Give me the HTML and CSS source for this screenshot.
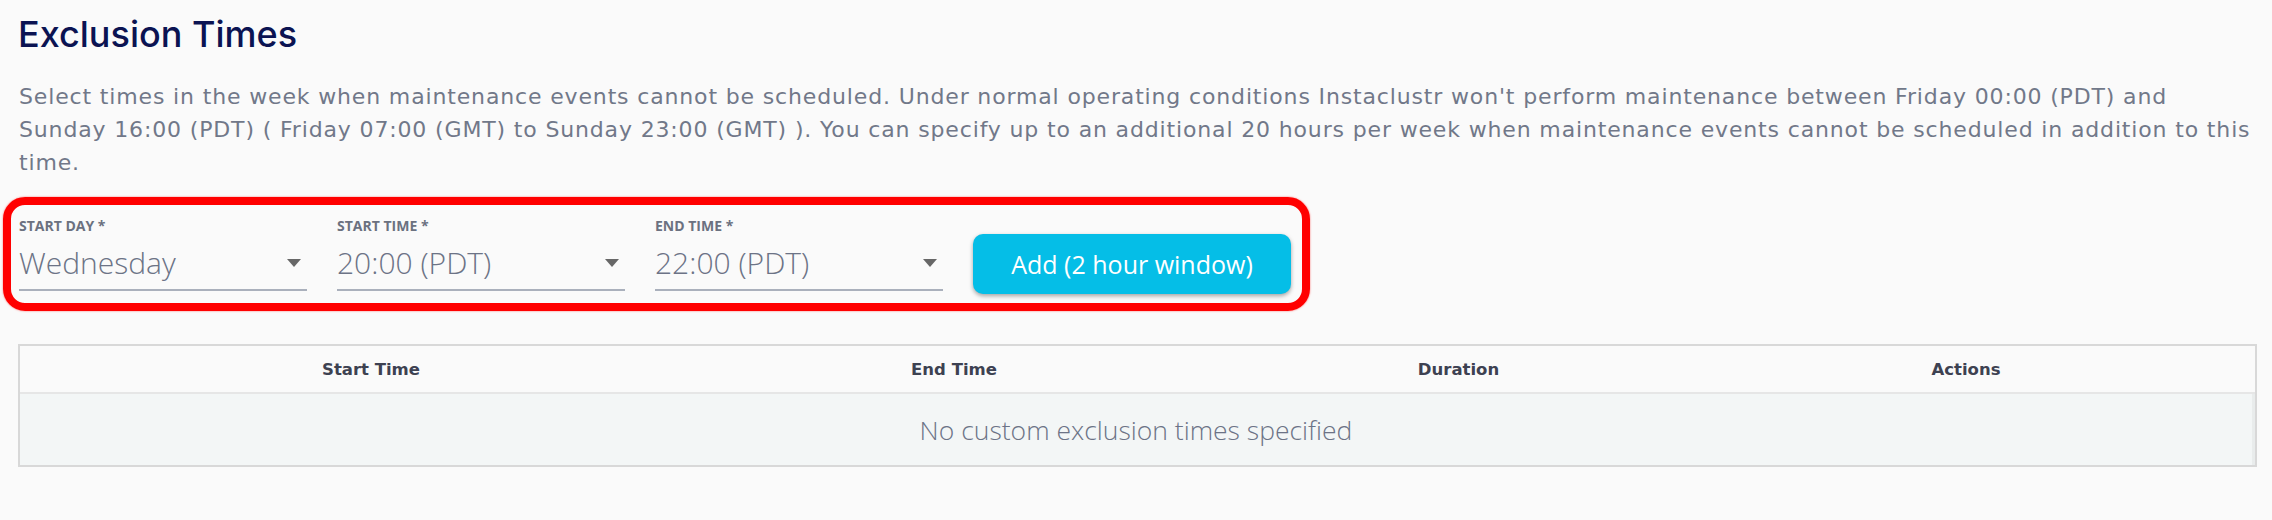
FILE: index.html
```html
<!DOCTYPE html>
<html lang="en">
<head>
<meta charset="utf-8">
<title>Exclusion Times</title>
<link rel="stylesheet" href="styles.css">
</head>
<body>
<main class="page">
  <h1 class="title">Exclusion Times</h1>
  <p class="intro">Select times in the week when maintenance events cannot be scheduled. Under normal operating conditions Instaclustr won't perform maintenance between Friday 00:00 (PDT) and<br>Sunday 16:00 (PDT) ( Friday 07:00 (GMT) to Sunday 23:00 (GMT) ). You can specify up to an additional 20 hours per week when maintenance events cannot be scheduled in addition to this<br>time.</p>

  <div class="form-row">
    <div class="field">
      <label class="field-label">START DAY *</label>
      <div class="select"><span class="select-value">Wednesday</span><span class="caret"></span></div>
    </div>
    <div class="field">
      <label class="field-label">START TIME *</label>
      <div class="select"><span class="select-value">20:00 (PDT)</span><span class="caret"></span></div>
    </div>
    <div class="field">
      <label class="field-label">END TIME *</label>
      <div class="select"><span class="select-value">22:00 (PDT)</span><span class="caret"></span></div>
    </div>
    <button class="add-btn" type="button">Add (2 hour window)</button>
  </div>

  <div class="grid-table">
    <div class="thead">
      <div class="th th-first">Start Time</div>
      <div class="th">End Time</div>
      <div class="th">Duration</div>
      <div class="th th-last">Actions</div>
    </div>
    <div class="tbody">
      <div class="col-line"></div>
      <div class="col-line"></div>
      <div class="col-line"></div>
      <div class="col-line last"></div>
      <div class="empty">No custom exclusion times specified</div>
    </div>
  </div>
</main>
</body>
</html>
```
FILE: styles.css
```css
html, body {
  margin: 0;
  padding: 0;
  background: #fafafa;
}

.page {
  padding: 0 15px 0 19px;
  font-family: "DejaVu Sans", "Open Sans", sans-serif;
}

.title {
  margin: 13px 0 0 -1px;
  font-family: "Inter", "DejaVu Sans", sans-serif;
  font-size: 36px;
  line-height: 42px;
  font-weight: 500;
  color: #0b1352;
}

.intro {
  margin: 25px 0 0;
  font-size: 22px;
  line-height: 33px;
  letter-spacing: 0.85px;
  color: #717889;
  white-space: nowrap;
}

.form-row {
  display: inline-flex;
  align-items: flex-end;
  gap: 30px;
  margin: 18px 0 0 -16px;
  padding: 13px 11px 12px 8px;
  border: 8px solid #ff0000;
  border-radius: 22px;
  box-shadow: 0 0 2px rgba(255, 0, 0, 0.6);
}

.field {
  display: flex;
  flex-direction: column;
  width: 288px;
}

.field-label {
  font-family: "Open Sans", sans-serif;
  font-size: 14px;
  line-height: 16px;
  font-weight: 700;
  color: #6b7180;
}

.select {
  display: flex;
  align-items: center;
  justify-content: space-between;
  margin-top: 2px;
  height: 53px;
  border-bottom: 2px solid #aab0bc;
}

.select-value {
  font-family: "Open Sans", sans-serif;
  font-size: 30px;
  font-weight: 300;
  line-height: 53px;
  color: #6c7386;
}

.caret {
  width: 0;
  height: 0;
  margin-right: 6px;
  border-left: 7px solid transparent;
  border-right: 7px solid transparent;
  border-top: 8px solid #676767;
}

.add-btn {
  width: 318px;
  height: 60px;
  margin-bottom: -3px;
  padding: 0;
  border: 0;
  border-radius: 10px;
  background: #05bee7;
  color: #ffffff;
  font-family: "Open Sans", sans-serif;
  font-size: 25px;
  font-weight: 400;
  box-shadow: 0 2px 4px rgba(0, 0, 0, 0.35);
}

.grid-table {
  margin: 33px 0 0 -1px;
  border: 2px solid #d8d8d8;
}

.thead,
.tbody {
  display: grid;
  grid-template-columns: 674px 520px 489px 1fr;
}

.thead {
  height: 46px;
  background: #fafafa;
  border-bottom: 2px solid #e6e6e6;
}

.th {
  display: flex;
  align-items: center;
  justify-content: center;
  font-size: 16.5px;
  font-weight: 700;
  color: #3d4151;
}

.th-first {
  padding-left: 28px;
}

.th-last {
  padding-right: 26px;
}

.tbody {
  height: 71px;
  background: #f3f6f6;
}

.col-line {
  grid-row: 1;
  border-right: 1px solid #e9ecec;
}

.col-line.last {
  border-right: 0;
}

.empty {
  grid-row: 1;
  grid-column: 1 / -1;
  align-self: center;
  justify-self: center;
  font-family: "Open Sans", sans-serif;
  font-size: 26.5px;
  font-weight: 300;
  color: #6c7386;
}
```
